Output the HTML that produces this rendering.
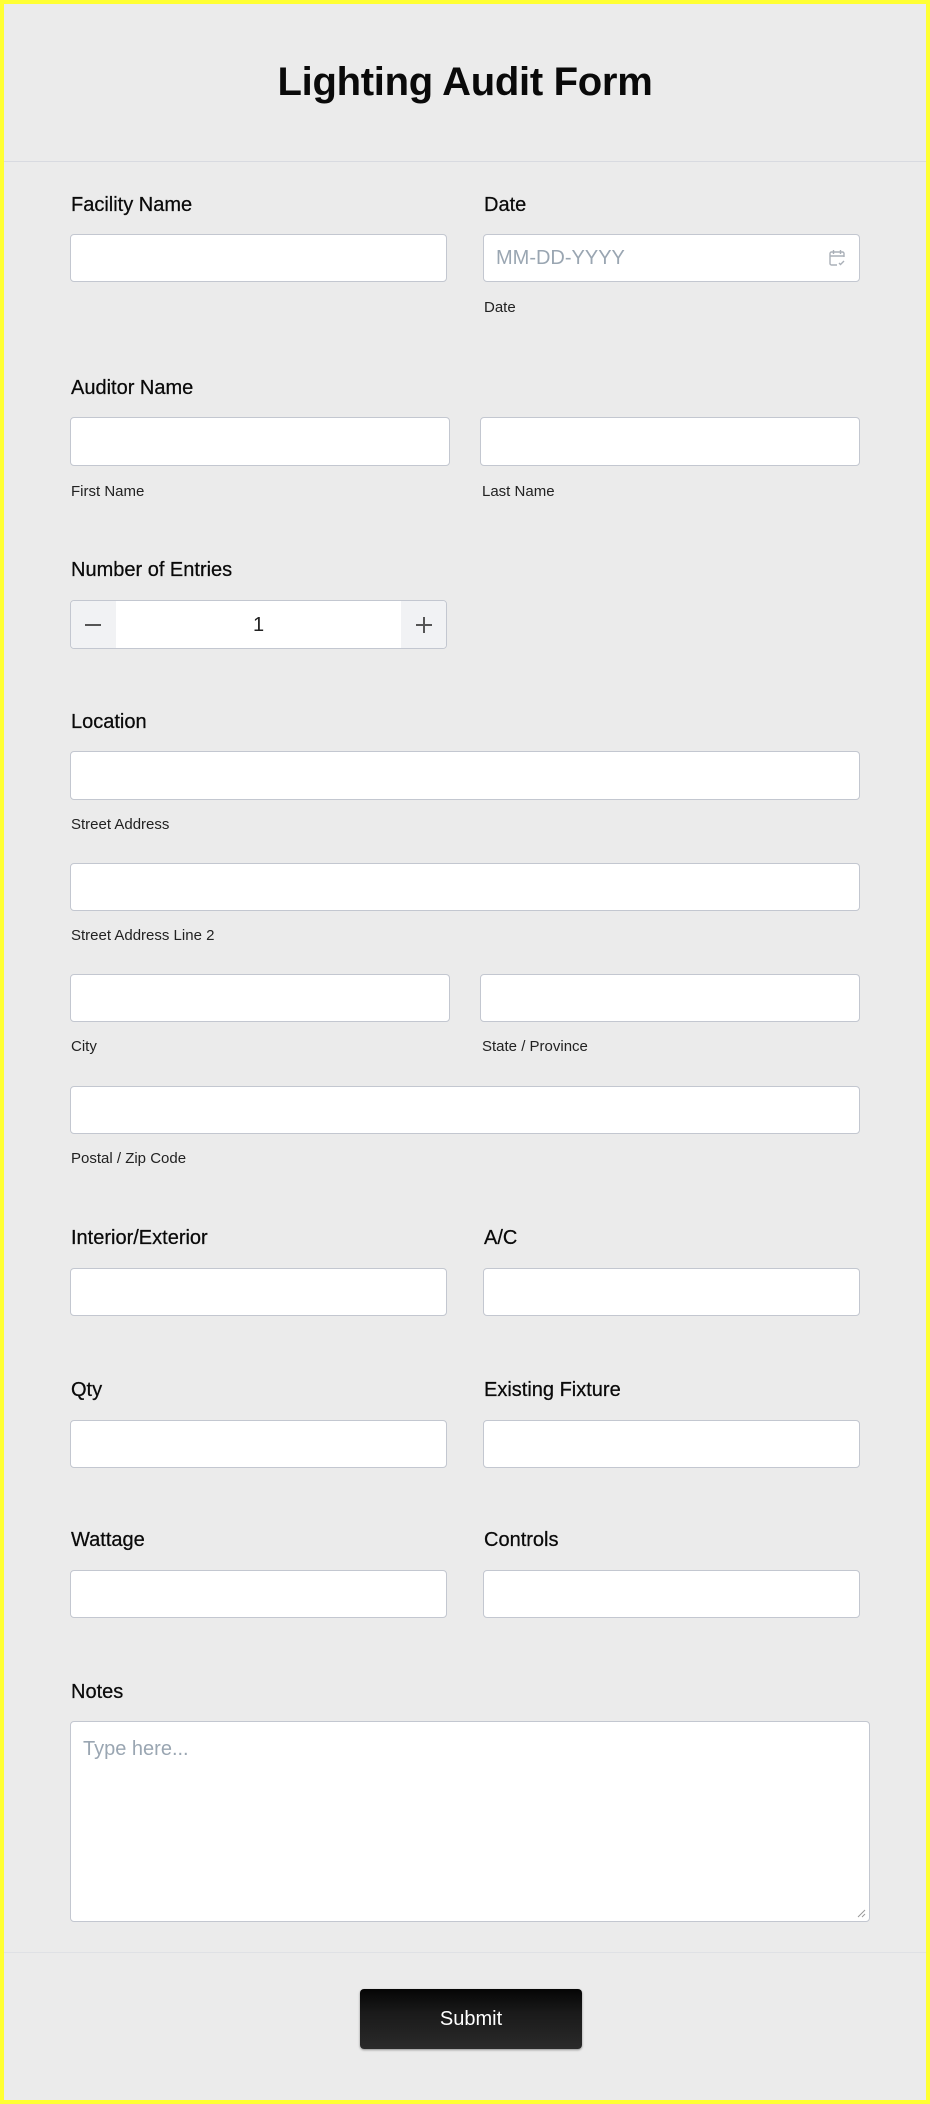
<!DOCTYPE html>
<html><head><meta charset="utf-8"><style>
*{box-sizing:border-box;margin:0;padding:0}
body{width:930px;height:2104px;background:#ebebeb;font-family:"Liberation Sans",sans-serif;overflow:hidden;position:relative}
.page{position:absolute;left:0;top:0;width:930px;height:2104px;background:#ebebeb}
.frame{position:absolute;left:0;top:0;width:930px;height:2104px;border:4px solid #ffff33;pointer-events:none}
.a{position:absolute}
.title{left:0;width:930px;top:60px;text-align:center;font-size:40px;font-weight:bold;color:#0a0a0a;letter-spacing:-0.3px}
.hr{left:0;width:930px;height:1px;background:#d8dae0}
.lbl{font-size:20px;color:#0a0a0a;-webkit-text-stroke:0.25px #0a0a0a}
.sub{font-size:15px;color:#222}
.in{background:#fff;border:1px solid #c3c7d0;border-radius:4px}
.ph{font-size:20px;color:#9aa6b2}
</style></head><body><div class="page">
<div class="a title">Lighting Audit Form</div>
<div class="a hr" style="top:161px"></div>

<div class="a lbl" style="left:71px;top:194px">Facility Name</div>
<div class="a in" style="left:70px;top:234px;width:377px;height:48px"></div>
<div class="a lbl" style="left:484px;top:194px">Date</div>
<div class="a in" style="left:483px;top:234px;width:377px;height:48px"></div>
<div class="a ph" style="left:496px;top:247px">MM-DD-YYYY</div>
<svg class="a" style="left:828px;top:249px" width="18" height="18" viewBox="0 0 18 18" fill="none" stroke="#aab0b8" stroke-width="1.4"><path d="M16 8V4.5a1.5 1.5 0 0 0-1.5-1.5h-11A1.5 1.5 0 0 0 2 4.5v10A1.5 1.5 0 0 0 3.5 16H9M2 7h14M5.5 1v4M12.5 1v4M11 14l1.5 1.5L16 12"/></svg>
<div class="a sub" style="left:484px;top:299px">Date</div>

<div class="a lbl" style="left:71px;top:377px">Auditor Name</div>
<div class="a in" style="left:70px;top:417px;width:380px;height:49px"></div>
<div class="a in" style="left:480px;top:417px;width:380px;height:49px"></div>
<div class="a sub" style="left:71px;top:483px">First Name</div>
<div class="a sub" style="left:482px;top:483px">Last Name</div>

<div class="a lbl" style="left:71px;top:559px">Number of Entries</div>
<div class="a in" style="left:70px;top:600px;width:377px;height:49px;overflow:hidden">
 <div class="a" style="left:0;top:0;width:45px;height:47px;background:#f1f2f4"></div>
 <div class="a" style="right:0;top:0;width:45px;height:47px;background:#f1f2f4"></div>
 <div class="a" style="left:14px;top:23px;width:16px;height:1.5px;background:#555"></div>
 <div class="a" style="right:14px;top:23px;width:16px;height:1.5px;background:#555"></div>
 <div class="a" style="right:21.5px;top:16px;width:1.5px;height:16px;background:#555"></div>
 <div class="a" style="left:0;width:375px;top:13px;text-align:center;font-size:20px;color:#222">1</div>
</div>

<div class="a lbl" style="left:71px;top:711px">Location</div>
<div class="a in" style="left:70px;top:751px;width:790px;height:49px"></div>
<div class="a sub" style="left:71px;top:816px">Street Address</div>
<div class="a in" style="left:70px;top:863px;width:790px;height:48px"></div>
<div class="a sub" style="left:71px;top:927px">Street Address Line 2</div>
<div class="a in" style="left:70px;top:974px;width:380px;height:48px"></div>
<div class="a in" style="left:480px;top:974px;width:380px;height:48px"></div>
<div class="a sub" style="left:71px;top:1038px">City</div>
<div class="a sub" style="left:482px;top:1038px">State / Province</div>
<div class="a in" style="left:70px;top:1086px;width:790px;height:48px"></div>
<div class="a sub" style="left:71px;top:1150px">Postal / Zip Code</div>

<div class="a lbl" style="left:71px;top:1227px">Interior/Exterior</div>
<div class="a lbl" style="left:484px;top:1227px">A/C</div>
<div class="a in" style="left:70px;top:1268px;width:377px;height:48px"></div>
<div class="a in" style="left:483px;top:1268px;width:377px;height:48px"></div>

<div class="a lbl" style="left:71px;top:1379px">Qty</div>
<div class="a lbl" style="left:484px;top:1379px">Existing Fixture</div>
<div class="a in" style="left:70px;top:1420px;width:377px;height:48px"></div>
<div class="a in" style="left:483px;top:1420px;width:377px;height:48px"></div>

<div class="a lbl" style="left:71px;top:1529px">Wattage</div>
<div class="a lbl" style="left:484px;top:1529px">Controls</div>
<div class="a in" style="left:70px;top:1570px;width:377px;height:48px"></div>
<div class="a in" style="left:483px;top:1570px;width:377px;height:48px"></div>

<div class="a lbl" style="left:71px;top:1681px">Notes</div>
<div class="a in" style="left:70px;top:1721px;width:800px;height:201px"></div>
<div class="a ph" style="left:83px;top:1738px">Type here...</div>
<svg class="a" style="left:856px;top:1908px" width="10" height="10" viewBox="0 0 10 10" stroke="#999" stroke-width="1"><path d="M9 2L2 9M9 6L6 9"/></svg>

<div class="a hr" style="top:1952px;background:#dfe1e5"></div>
<div class="a" style="left:360px;top:1989px;width:222px;height:60px;border-radius:4px;background:linear-gradient(#050505,#1a1a1a 40%,#2a2a2a);box-shadow:0 1px 2px rgba(0,0,0,.4);color:#fff;font-size:20px;text-align:center;line-height:60px">Submit</div>
</div><div class="frame"></div></body></html>
